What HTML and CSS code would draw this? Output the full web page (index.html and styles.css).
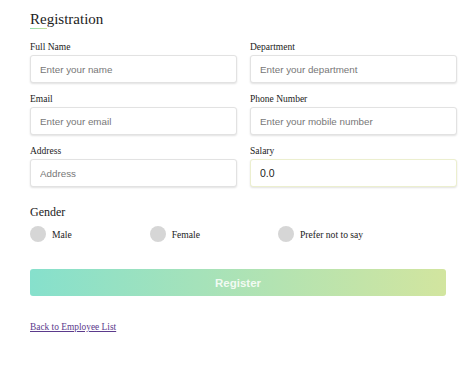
FILE: index.html
```html
<!DOCTYPE html>
<html lang="en">
<head>
    <meta charset="UTF-8">
    <meta name="viewport" content="width=device-width, initial-scale=1.0">
    <title>Registration</title>
    <link rel="stylesheet" href="styles.css">
</head>
<body>

    <main class="container">
        <h2 class="title">Registration</h2>

        <form class="form">
            <div class="grid">
                <div class="field">
                    <label>Full Name</label>
                    <input type="text" placeholder="Enter your name">
                </div>
                <div class="field">
                    <label>Department</label>
                    <input type="text" placeholder="Enter your department">
                </div>
                <div class="field">
                    <label>Email</label>
                    <input type="text" placeholder="Enter your email">
                </div>
                <div class="field">
                    <label>Phone Number</label>
                    <input type="text" placeholder="Enter your mobile number">
                </div>
                <div class="field">
                    <label>Address</label>
                    <input type="text" placeholder="Address">
                </div>
                <div class="field">
                    <label>Salary</label>
                    <input type="text" value="0.0" class="salary">
                </div>
            </div>

            <h3 class="gender-title">Gender</h3>
            <div class="gender">
                <label class="radio"><span class="dot"></span>Male</label>
                <label class="radio"><span class="dot"></span>Female</label>
                <label class="radio"><span class="dot"></span>Prefer not to say</label>
            </div>

            <button type="button" class="btn">Register</button>
        </form>

        <a href="#" class="back">Back to Employee List</a>
    </main>

</body>
</html>
```

FILE: styles.css
```css
body {
    font-family: 'Liberation Serif', 'Times New Roman', serif;
    margin: 0;
    padding: 0;
    background-color: #fff;
    color: #222;
}
.container {
    width: 416px;
    margin: 0 0 0 30px;
    padding-top: 10px;
}
.title {
    position: relative;
    margin: 0 0 12px;
    font-size: 15px;
    font-weight: normal;
    line-height: 18px;
}
.title::after {
    content: '';
    position: absolute;
    left: 0;
    top: 18px;
    width: 17px;
    height: 1px;
    background: linear-gradient(to right, #8fdcb0, #c8e29a);
}

.grid {
    display: grid;
    width: 427px;
    grid-template-columns: 1fr 1fr;
    column-gap: 13px;
    row-gap: 9px;
}
.field label {
    display: block;
    font-size: 9.5px;
    line-height: 14px;
    margin-bottom: 1px;
}
.field input {
    box-sizing: border-box;
    width: 100%;
    height: 28px;
    padding: 0 9px;
    border: 1px solid #e2e2e2;
    border-radius: 3px;
    box-shadow: 0 1px 2px rgba(0, 0, 0, 0.12);
    font-family: 'Liberation Sans', Arial, sans-serif;
    font-size: 9.8px;
    color: #333;
    outline: none;
}
.field input::placeholder {
    color: #777;
}
.field input.salary {
    border-color: #ecefcf;
    color: #222;
    font-size: 10.5px;
}

.gender-title {
    margin: 18px 0 7px;
    font-size: 12px;
    font-weight: normal;
    line-height: 14px;
}
.gender {
    display: flex;
    gap: 78px;
}
.radio {
    display: flex;
    align-items: center;
    gap: 6px;
    font-size: 9.6px;
}
.dot {
    width: 16px;
    height: 16px;
    border-radius: 50%;
    background-color: #d6d6d6;
}

.btn {
    display: block;
    width: 100%;
    height: 27px;
    margin-top: 27px;
    border: none;
    border-radius: 3px;
    background: linear-gradient(to right, #86e0cc, #d2e59f);
    color: rgba(255, 255, 255, 0.85);
    font-family: 'Liberation Sans', Arial, sans-serif;
    font-size: 11.5px;
    font-weight: bold;
}

.back {
    display: inline-block;
    margin-top: 26px;
    font-size: 9.4px;
    color: #5b3a8c;
}
```
